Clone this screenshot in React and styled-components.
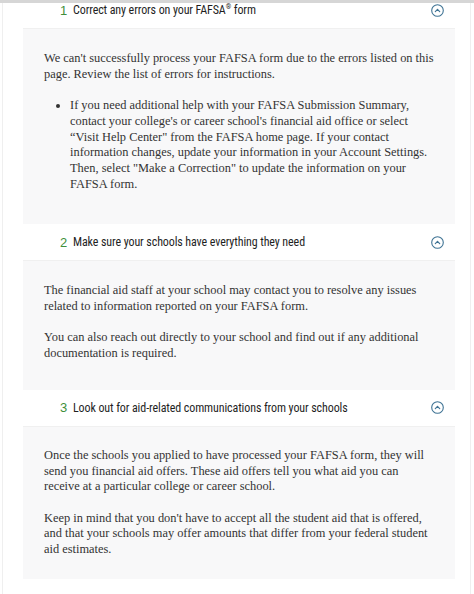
import React from "react";
import styled, { createGlobalStyle } from "styled-components";

const Global = createGlobalStyle`
  html, body {
    margin: 0;
    padding: 0;
    background: #fff;
  }
`;

const Frame = styled.div`
  width: 474px;
  height: 594px;
  box-sizing: border-box;
  border-top: 3px solid #d6d6d6;
  padding-left: 2px;
  overflow: hidden;
`;

const Card = styled.div`
  width: 469px;
  height: 100%;
  box-sizing: border-box;
  border-left: 1px solid #efefef;
  border-right: 1px solid #efefef;
  padding: 0 15px 0 20px;
  overflow: hidden;
`;

// the shot cuts off the top of the first header
const Steps = styled.div`
  margin-top: -11px;
  display: flex;
  flex-direction: column;
`;

const Header = styled.div`
  height: 37px;
  box-sizing: border-box;
  display: flex;
  align-items: center;
  padding: 0 11px 0 37px;
  background: #fff;
  border-bottom: 1px solid #f0f0f0;
`;

const Num = styled.span`
  color: #3f8f3a;
  font-family: "Liberation Sans", Arial, sans-serif;
  font-size: 13px;
  width: 13px;
  flex: none;
`;

const Title = styled.span`
  flex: 1;
  color: #1f1f1f;
  font-family: "Liberation Sans Narrow", "Roboto Condensed", "Liberation Sans", sans-serif;
  font-size: 12px;
  letter-spacing: -0.1px;
`;

const Reg = styled.sup`
  font-size: 7px;
`;

const Panel = styled.div`
  background: #f8f8f9;
  padding: ${p => p.top}px 20px ${p => p.bottom}px 21px;
  color: #333;
  font-family: "Liberation Serif", "Times New Roman", serif;
  font-size: 12.4px;
  line-height: 15.7px;
`;

const P = styled.p`
  margin: 0 0 15.7px;
  &:last-child {
    margin-bottom: 0;
  }
`;

const List = styled.ul`
  margin: 0;
  padding-left: 26px;
  list-style: disc;
`;

const Chevron = () => (
  <svg width="13" height="13" viewBox="0 0 13 13" fill="none">
    <circle cx="6.5" cy="6.5" r="5.8" stroke="#3f7394" strokeWidth="1.1" />
    <path d="M4.3 7.6 L6.5 5.3 L8.7 7.6" stroke="#3f7394" strokeWidth="1.2" strokeLinecap="round" strokeLinejoin="round" />
  </svg>
);

const Step = ({ n, title, children, top = 21, bottom = 29 }) => (
  <>
    <Header>
      <Num>{n}</Num>
      <Title>{title}</Title>
      <Chevron />
    </Header>
    <Panel top={top} bottom={bottom}>{children}</Panel>
  </>
);

const App = () => (
  <Frame>
    <Global />
    <Card>
      <Steps>
        <Step n="1" title={<>Correct any errors on your FAFSA<Reg>®</Reg> form</>} top={22} bottom={32}>
          <P>
            We can't successfully process your FAFSA form due to the errors listed on this
            page. Review the list of errors for instructions.
          </P>
          <List>
            <li>
              If you need additional help with your FAFSA Submission Summary,
              contact your college's or career school's financial aid office or select
              “Visit Help Center" from the FAFSA home page. If your contact
              information changes, update your information in your Account Settings.
              Then, select "Make a Correction" to update the information on your
              FAFSA form.
            </li>
          </List>
        </Step>
        <Step n="2" title="Make sure your schools have everything they need" top={22} bottom={28}>
          <P>
            The financial aid staff at your school may contact you to resolve any issues
            related to information reported on your FAFSA form.
          </P>
          <P>
            You can also reach out directly to your school and find out if any additional
            documentation is required.
          </P>
        </Step>
        <Step n="3" title="Look out for aid-related communications from your schools" top={21} bottom={21}>
          <P>
            Once the schools you applied to have processed your FAFSA form, they will
            send you financial aid offers. These aid offers tell you what aid you can
            receive at a particular college or career school.
          </P>
          <P>
            Keep in mind that you don't have to accept all the student aid that is offered,
            and that your schools may offer amounts that differ from your federal student
            aid estimates.
          </P>
        </Step>
      </Steps>
    </Card>
  </Frame>
);

export default App;
